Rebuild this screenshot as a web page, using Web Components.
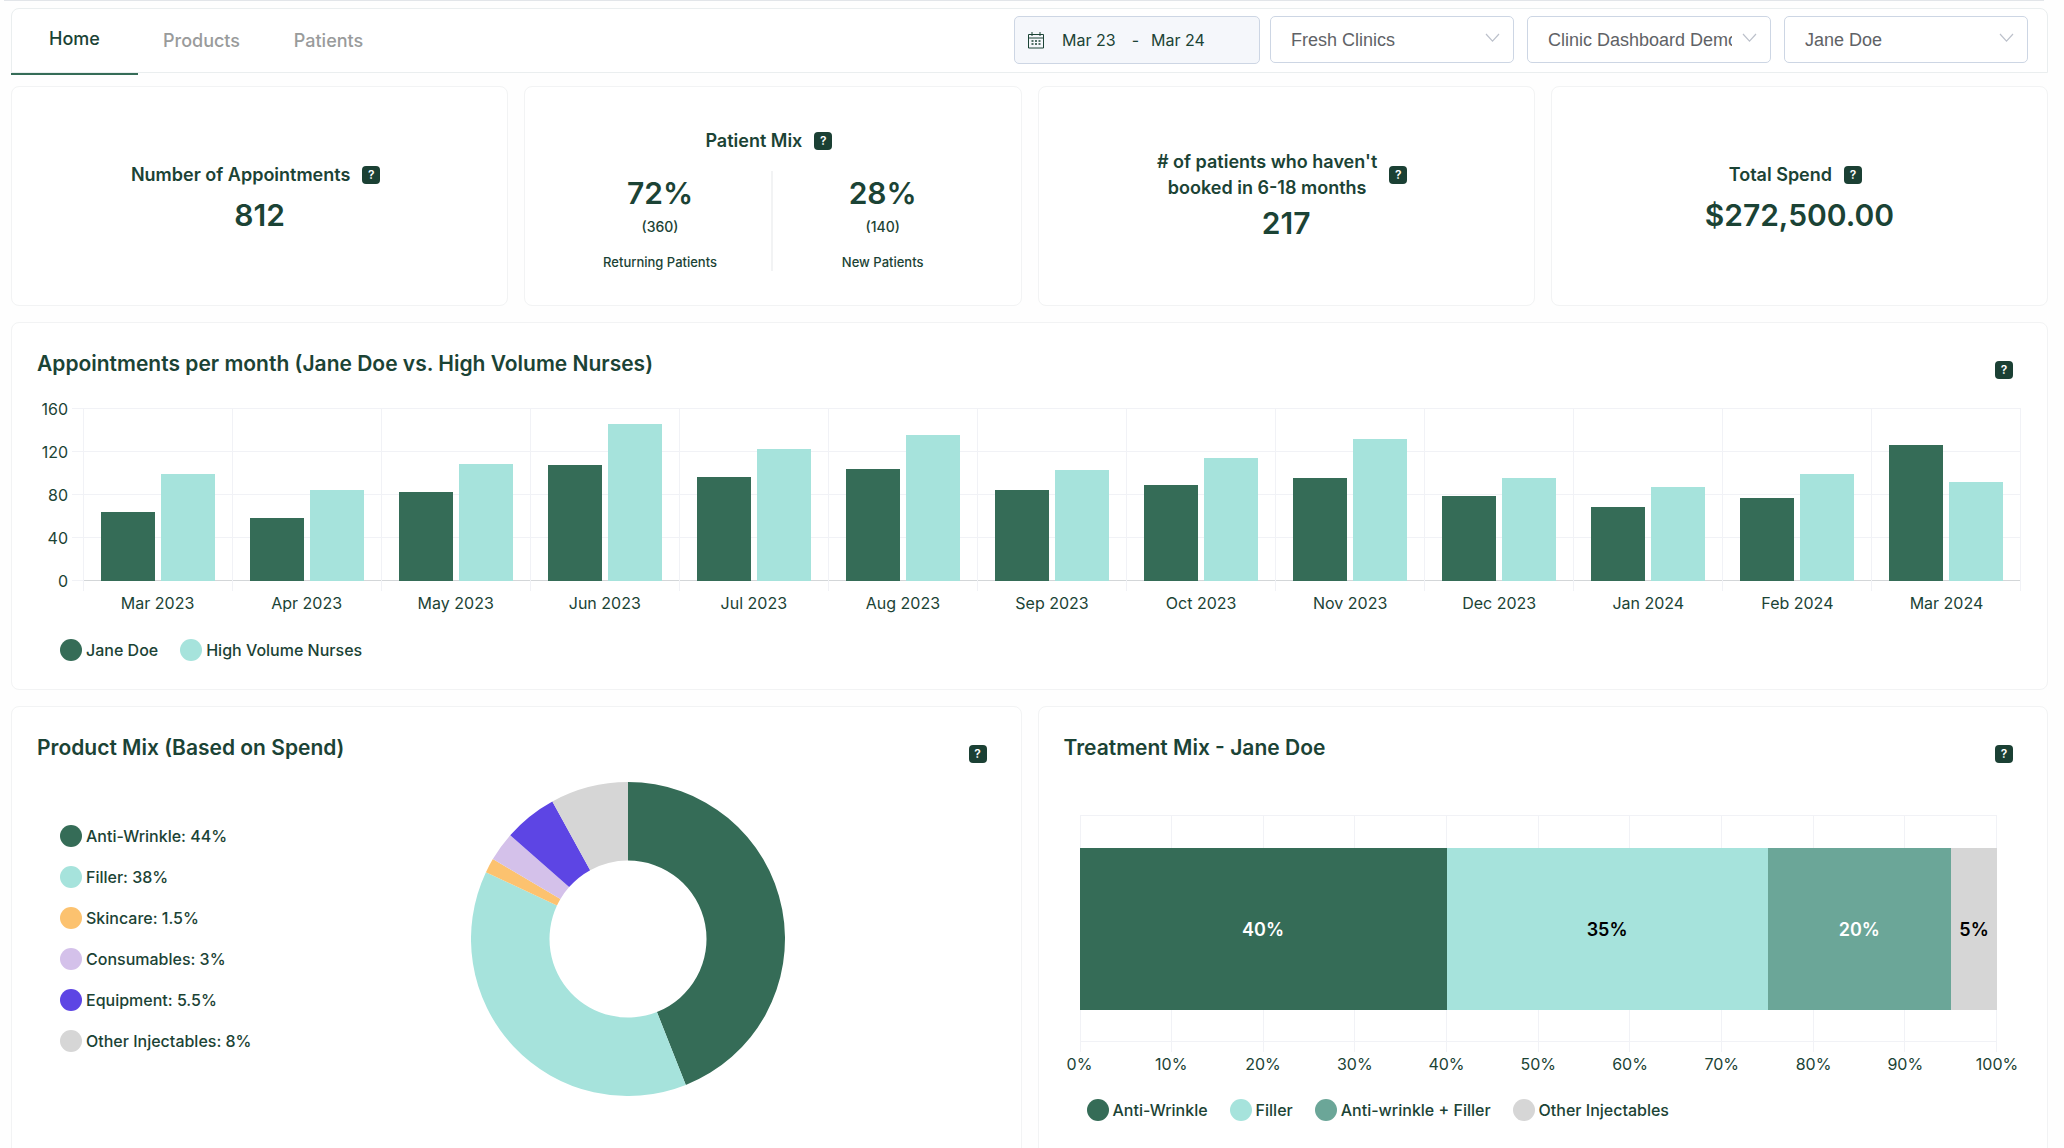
<!DOCTYPE html>
<html lang="en">
<head>
<meta charset="utf-8">
<title>Clinic Dashboard</title>
<style>
  html, body { margin: 0; padding: 0; background: #fefefe; }
  body {
    font-family: Inter, "Liberation Sans", sans-serif;
    font-size: 16px;
    color: #1b4335;
    --ink: #1b4335;
    --green: #356c57;
    --mint: #a6e3dc;
    --sage: #6ba698;
    --grey: #d6d6d6;
    --amber: #fcc26f;
    --lilac: #d4c1ea;
    --violet: #5d45e4;
    --line: #f2f3f4;
    --grid: #f1f2f6;
  }
</style>
</head>
<body>
<clinic-dashboard></clinic-dashboard>

<script>
const define = (name, html, setup) => {
  const template = document.createElement('template');
  template.innerHTML = html;
  customElements.define(name, class extends HTMLElement {
    connectedCallback() {
      if (this.shadowRoot) return;
      this.attachShadow({ mode: 'open' }).append(template.content.cloneNode(true));
      if (setup) setup(this, this.shadowRoot);
    }
  });
};

/* small square help button */
define('help-tip', `
  <style>
    :host { display: block; flex: none; }
    button {
      display: flex; align-items: center; justify-content: center;
      width: 18px; height: 18px; padding: 0; border: 0; border-radius: 4px;
      background: #1b4034; color: #fff; font: 600 12px/18px Inter, sans-serif;
    }
  </style>
  <button type="button" aria-label="Help">?</button>
`);

/* one entry of the top navigation */
define('nav-tab', `
  <style>
    :host { display: flex; width: 127px; }
    a {
      flex: 1; display: flex; align-items: center; justify-content: center;
      font-size: 18px; font-weight: 500; color: #999b9b; text-decoration: none;
    }
    :host([active]) { margin-bottom: -3px; }
    :host([active]) a { color: var(--ink); padding-bottom: 5px; border-bottom: 2px solid var(--green); }
  </style>
  <a href="#"><slot></slot></a>
`);

define('filter-select', `
  <style>
    :host { display: grid; width: 244px; height: 47px; }
    select, svg { grid-area: 1 / 1; }
    select {
      appearance: none; width: 100%; height: 100%; margin: 0; box-sizing: border-box;
      padding: 0 38px 0 20px; border: 1px solid #cdd6e4; border-radius: 5px;
      background: #fff; color: #606266; font: 18px "Liberation Sans", Arial, sans-serif;
      overflow: hidden; text-overflow: clip; white-space: nowrap;
    }
    svg { justify-self: end; align-self: center; margin: 0 14px 4px 0; pointer-events: none; }
  </style>
  <select></select>
  <svg width="15" height="10" viewBox="0 0 15 10" fill="none" stroke="#bcc1cb" stroke-width="1.2"><path d="M1 1 7.5 8.2 14 1"/></svg>
`, (host, root) => {
  const select = root.querySelector('select');
  select.setAttribute('aria-label', host.getAttribute('label'));
  select.append(new Option(host.getAttribute('value')));
});

define('date-range', `
  <style>
    :host {
      display: flex; align-items: center; box-sizing: border-box; width: 246px; height: 48px;
      padding-left: 13px; border: 1px solid #cdd6e4; border-radius: 5px; background: #f5f7fb;
    }
    input {
      width: 58px; margin: 0; padding: 0; border: 0; background: none;
      font: 16px Inter, sans-serif; color: var(--ink);
    }
    svg { margin-right: 18px; }
    span { width: 31px; text-align: center; }
  </style>
  <svg width="16" height="17" viewBox="0 0 16 17" fill="none" stroke="#1b4335" stroke-width="1">
    <path d="M.5 2.5h15v13.500H.5zM.5 6h15M4 0v4M12 0v4"/>
    <path d="M3.500 9h2m1.500 0h2m1.500 0h2M3.500 12h2m1.500 0h2m1.500 0h2" stroke-width="1.300"/>
  </svg>
  <input aria-label="From" value="Mar 23" readonly><span>-</span><input aria-label="To" value="Mar 24" readonly>
`);

define('app-header', `
  <style>
    :host {
      display: flex; justify-content: space-between; box-sizing: border-box; height: 65px;
      border: 1px solid #eaeeef; border-radius: 8px 8px 0 0; background: #fff;
    }
    nav { display: flex; margin-left: -1px; }
    form { display: flex; gap: 13px; align-items: flex-start; padding: 7px 19px 0 0; }
    date-range { margin-right: -3px; }
  </style>
  <nav>
    <nav-tab active>Home</nav-tab>
    <nav-tab>Products</nav-tab>
    <nav-tab>Patients</nav-tab>
  </nav>
  <form>
    <date-range></date-range>
    <filter-select label="Company" value="Fresh Clinics"></filter-select>
    <filter-select label="Clinic" value="Clinic Dashboard Demo"></filter-select>
    <filter-select label="Nurse" value="Jane Doe"></filter-select>
  </form>
`);

define('dash-card', `
  <style>
    :host {
      display: flex; flex-direction: column; box-sizing: border-box; min-width: 0;
      border: 1px solid var(--line); border-radius: 8px; background: #fff;
    }
  </style>
  <slot></slot>
`);

define('stat-title', `
  <style>
    :host {
      display: flex; align-items: center; justify-content: center; gap: 12px; min-height: 37px;
      font-size: 18px; line-height: 26px; font-weight: 600; text-align: center;
    }
    help-tip { margin-right: 8px; }
  </style>
  <div><slot></slot></div><help-tip></help-tip>
`);

define('stat-value', `
  <style>
    :host { display: block; font-size: 30px; line-height: 44px; font-weight: 600; text-align: center; }
  </style>
  <slot></slot>
`);

define('stat-card', `
  <style>
    :host { display: grid; }
    dash-card { justify-content: center; padding-top: 1px; }
  </style>
  <dash-card><slot name="title"></slot><slot></slot></dash-card>
`);

define('patient-mix', `
  <style>
    :host { display: grid; grid-template-columns: 1fr 1fr; margin: 11px 28px 0 24px; }
    div { display: flex; flex-direction: column; align-items: center; font-weight: 500; }
    div + div { border-left: 2px solid var(--line); }
    b { font-size: 14px; line-height: 24px; font-weight: 500; }
    span { margin-top: 14px; font-size: 13px; line-height: 18px; }
  </style>
  <div><stat-value>72%</stat-value><b>(360)</b><span>Returning Patients</span></div>
  <div><stat-value>28%</stat-value><b>(140)</b><span>New Patients</span></div>
`);

define('card-heading', `
  <style>
    :host { display: flex; justify-content: space-between; align-items: flex-start; padding: 26px 34px 0 25px; }
    h2 { margin: 0; font-size: 21px; line-height: 30px; font-weight: 600; }
    help-tip { margin-top: 12px; }
  </style>
  <h2><slot></slot></h2><help-tip></help-tip>
`);

define('legend-item', `
  <style>
    :host { display: flex; align-items: center; gap: 4px; font-size: 16px; line-height: 22px; font-weight: 500; white-space: nowrap; }
    i { width: 22px; height: 22px; border-radius: 50%; }
  </style>
  <i></i><span><slot></slot></span>
`, (host, root) => {
  root.querySelector('i').style.background = 'var(--' + host.getAttribute('tone') + ')';
});

/* grouped columns, two series per month, on a 0-160 scale */
define('month-chart', `
  <style>
    :host { display: flex; margin: 19px 26px 0 25px; }
    .scale {
      display: flex; flex-direction: column; justify-content: space-between; align-items: flex-end;
      width: 31px; height: 194px; line-height: 22px;
    }
    .plot { flex: 1; display: grid; grid-template-rows: 172px auto; margin: 10px 0 0 4px; }
    .rules, .months { grid-area: 1 / 1; }
    .rules { display: flex; flex-direction: column; justify-content: space-between; margin-bottom: -1px; }
    .rules i { height: 1px; background: var(--grid); }
    .months { display: flex; margin-left: 11px; border-bottom: 1px solid #d3d6d8; margin-bottom: -1px; }
    .month {
      flex: 1; display: flex; align-items: flex-end; gap: 6px; box-sizing: border-box; min-width: 0;
      padding: 0 17px 10px; margin-bottom: -11px; border-left: 1px solid var(--grid);
    }
    .month:last-child { border-right: 1px solid var(--grid); }
    .month i { flex: 1; background: var(--green); }
    .month i + i { background: var(--mint); }
    .names { display: flex; margin: 12px 0 0 11px; line-height: 22px; }
    .names span { flex: 1; text-align: center; }
  </style>
  <div class="scale"><span>160</span><span>120</span><span>80</span><span>40</span><span>0</span></div>
  <div class="plot">
    <div class="rules"><i></i><i></i><i></i><i></i><i></i></div>
    <div class="months"></div>
    <div class="names"></div>
  </div>
`, (host, root) => {
  const data = [
    ['Mar 2023', 64, 99], ['Apr 2023', 58, 84], ['May 2023', 82, 108], ['Jun 2023', 107, 145],
    ['Jul 2023', 96, 122], ['Aug 2023', 104, 135], ['Sep 2023', 84, 103], ['Oct 2023', 89, 114],
    ['Nov 2023', 95, 131], ['Dec 2023', 79, 95], ['Jan 2024', 68, 87], ['Feb 2024', 77, 99],
    ['Mar 2024', 126, 92]
  ];
  const bar = v => '<i style="height:' + v / 1.6 + '%"></i>';
  root.querySelector('.months').innerHTML =
    data.map(d => '<div class="month">' + bar(d[1]) + bar(d[2]) + '</div>').join('');
  root.querySelector('.names').innerHTML = data.map(d => '<span>' + d[0] + '</span>').join('');
});

define('donut-chart', `
  <style>
    :host { display: block; }
    svg { display: block; width: 314px; height: 314px; }
  </style>
  <svg viewBox="-157 -157 314 314" role="img" aria-label="Product mix"></svg>
`, (host, root) => {
  const parts = [[44, 'green'], [38, 'mint'], [1.5, 'amber'], [3, 'lilac'], [5.5, 'violet'], [8, 'grey']];
  const at = (share, r) => {
    const a = share / 100 * 2 * Math.PI;
    return (r * Math.sin(a)).toFixed(2) + ' ' + (-r * Math.cos(a)).toFixed(2);
  };
  let from = 0;
  root.querySelector('svg').innerHTML = parts.map(([share, tone]) => {
    const to = from + share;
    const d = 'M' + at(from, 157) + 'A157 157 0 0 1 ' + at(to, 157) + 'L' + at(to, 78.5) + 'A78.5 78.5 0 0 0 ' + at(from, 78.5) + 'Z';
    from = to;
    return '<path style="fill:var(--' + tone + ')" d="' + d + '"/>';
  }).join('');
});

/* one stacked horizontal bar on a 0-100% scale */
define('share-chart', `
  <style>
    :host { display: block; margin: 52px 50px 0 41px; }
    .plot { display: grid; grid-template-rows: 226px; border-top: 1px solid var(--grid); }
    .grid, .bar { grid-area: 1 / 1; }
    .grid { display: flex; border-bottom: 1px solid var(--grid); }
    .grid i { flex: 1; border-left: 1px solid var(--grid); margin-bottom: -11px; }
    .grid i:last-child { border-right: 1px solid var(--grid); }
    .bar { display: flex; align-self: center; height: 162px; font-size: 18px; font-weight: 600; }
    .bar span { display: flex; align-items: center; justify-content: center; min-width: 0; }
    .axis { display: flex; justify-content: space-between; margin: 11px -30px 0; line-height: 22px; }
    .axis span { width: 60px; text-align: center; }
  </style>
  <div class="plot">
    <div class="grid"><i></i><i></i><i></i><i></i><i></i><i></i><i></i><i></i><i></i><i></i></div>
    <div class="bar">
      <span style="flex:40;background:var(--green);color:#fff">40%</span>
      <span style="flex:35;background:var(--mint);color:#000">35%</span>
      <span style="flex:20;background:var(--sage);color:#fff">20%</span>
      <span style="flex:5;background:var(--grey);color:#000">5%</span>
    </div>
  </div>
  <div class="axis"><span>0%</span><span>10%</span><span>20%</span><span>30%</span><span>40%</span><span>50%</span><span>60%</span><span>70%</span><span>80%</span><span>90%</span><span>100%</span></div>
`);

define('clinic-dashboard', `
  <style>
    :host { display: block; height: 100vh; overflow: hidden; }
    .edge { height: 1px; margin: 0 20px 7px 4px; background: #e2e5e9; }
    main { display: flex; flex-direction: column; padding: 0 16px 0 11px; }
    .stats { display: grid; grid-template-columns: repeat(4, 1fr); grid-auto-rows: 220px; gap: 16px; margin: 13px 0 16px; }
    .charts { display: grid; grid-template-columns: 1fr 1fr; grid-auto-rows: 480px; gap: 16px; margin-top: 16px; }
    .row { display: flex; gap: 22px; margin: 25px 0 28px 48px; }
    .treat { margin-top: 24px; }
    .product { display: grid; grid-template-columns: 197px 1fr; justify-items: center; margin: 19px 22px 0 48px; }
    .list { display: flex; flex-direction: column; gap: 19px; justify-self: start; margin-top: 43px; }
  </style>
  <div class="edge"></div>
  <main>
    <app-header></app-header>
    <section class="stats">
      <stat-card>
        <stat-title slot="title">Number of Appointments</stat-title>
        <stat-value>812</stat-value>
      </stat-card>
      <stat-card>
        <stat-title slot="title">Patient Mix</stat-title>
        <patient-mix></patient-mix>
      </stat-card>
      <stat-card>
        <stat-title slot="title"># of patients who haven't<br>booked in 6-18 months</stat-title>
        <stat-value>217</stat-value>
      </stat-card>
      <stat-card>
        <stat-title slot="title">Total Spend</stat-title>
        <stat-value>$272,500.00</stat-value>
      </stat-card>
    </section>
    <dash-card>
      <card-heading>Appointments per month (Jane Doe vs. High Volume Nurses)</card-heading>
      <month-chart></month-chart>
      <div class="row">
        <legend-item tone="green">Jane Doe</legend-item>
        <legend-item tone="mint">High Volume Nurses</legend-item>
      </div>
    </dash-card>
    <section class="charts">
      <dash-card>
        <card-heading>Product Mix (Based on Spend)</card-heading>
        <div class="product">
          <div class="list">
            <legend-item tone="green">Anti-Wrinkle: 44%</legend-item>
            <legend-item tone="mint">Filler: 38%</legend-item>
            <legend-item tone="amber">Skincare: 1.5%</legend-item>
            <legend-item tone="lilac">Consumables: 3%</legend-item>
            <legend-item tone="violet">Equipment: 5.5%</legend-item>
            <legend-item tone="grey">Other Injectables: 8%</legend-item>
          </div>
          <donut-chart></donut-chart>
        </div>
      </dash-card>
      <dash-card>
        <card-heading>Treatment Mix - Jane Doe</card-heading>
        <share-chart></share-chart>
        <div class="row treat">
          <legend-item tone="green">Anti-Wrinkle</legend-item>
          <legend-item tone="mint">Filler</legend-item>
          <legend-item tone="sage">Anti-wrinkle + Filler</legend-item>
          <legend-item tone="grey">Other Injectables</legend-item>
        </div>
      </dash-card>
    </section>
  </main>
</clinic-dashboard>
`);
</script>
</body>
</html>
